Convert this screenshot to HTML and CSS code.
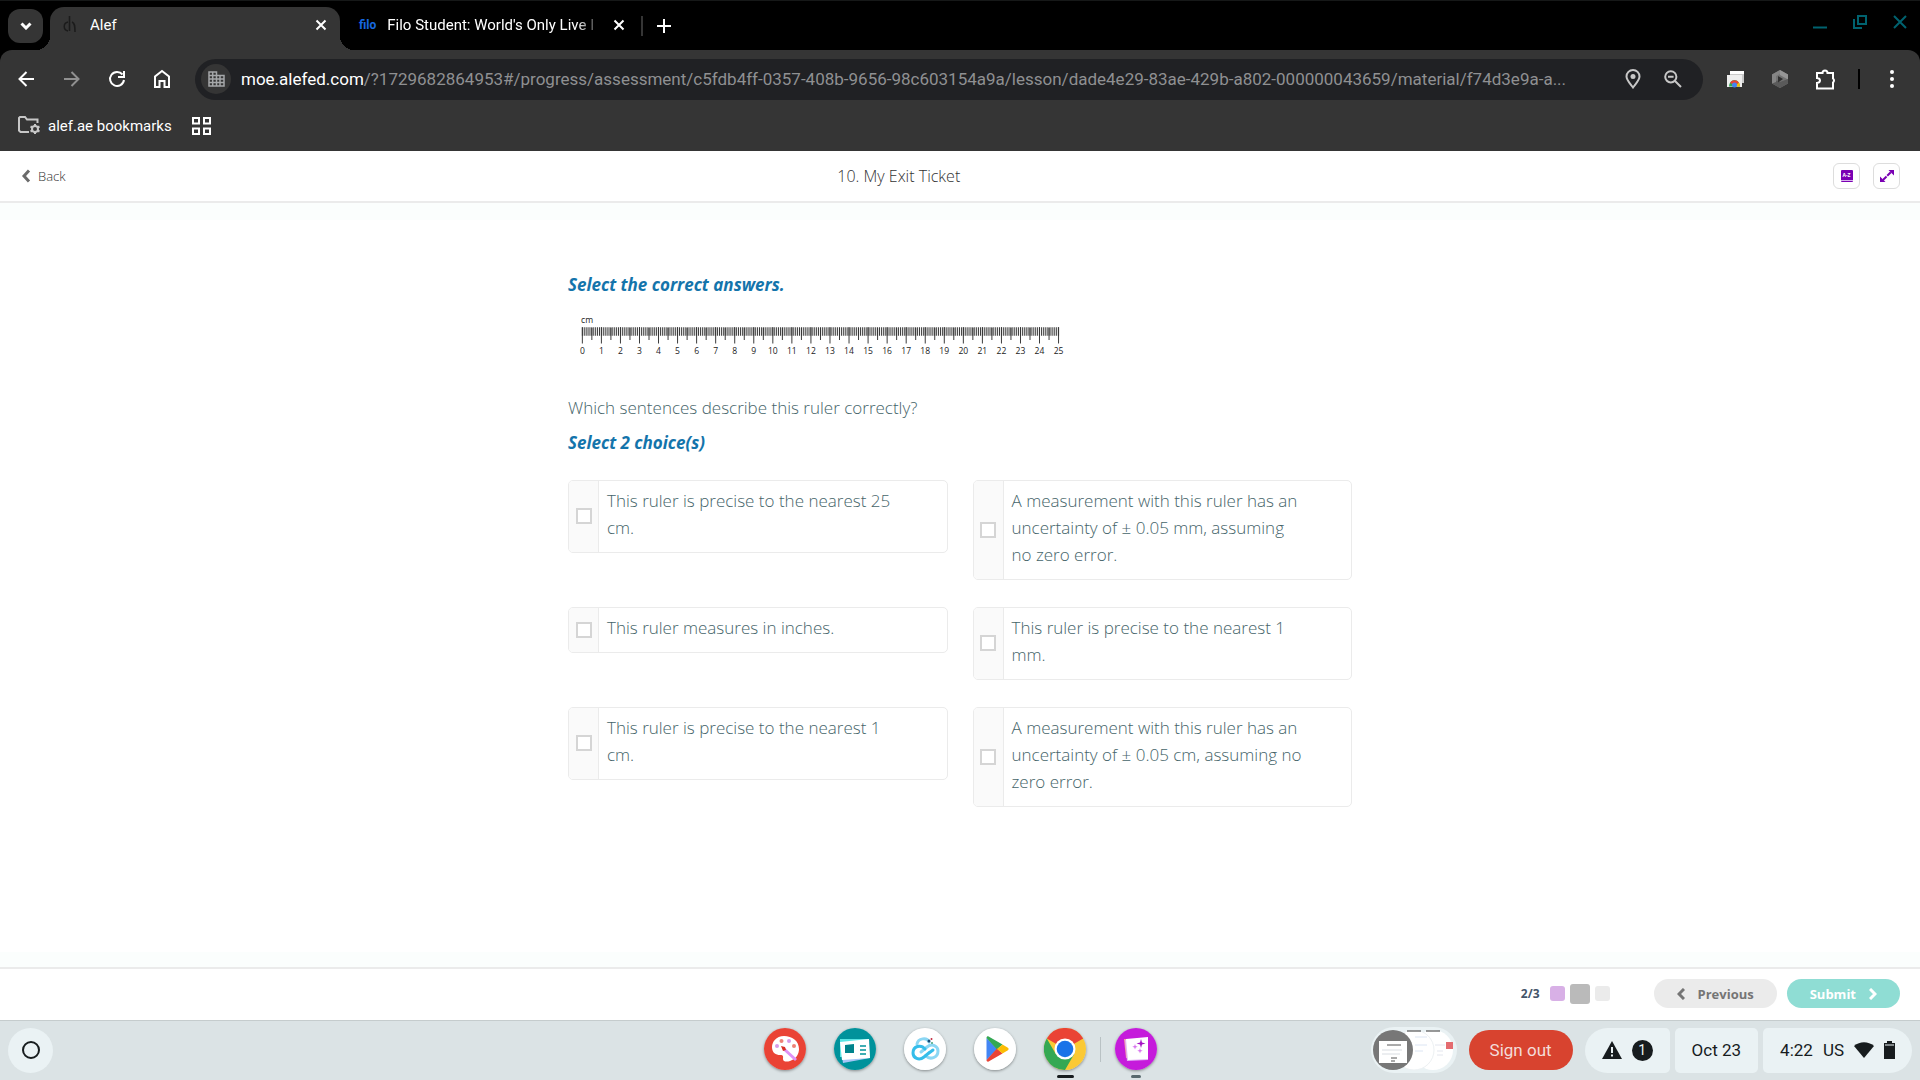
FILE: index.html
```html
<!doctype html>
<html lang="en">
  <head>
    <meta charset="UTF-8" />
    <meta name="viewport" content="width=device-width, initial-scale=1.0" />
    <title>Alef</title>
    <link rel="stylesheet" href="styles.css">
  </head>
  <body>
    <header class="browser">
      <div class="tabstrip">
        <button class="tab-search" aria-label="Search tabs">
          <svg width="12" height="8" viewBox="0 0 12 8"><path d="M1.500 1.500L6 6l4.500-4.500" class="line thick" /></svg>
        </button>
        <div class="tab active">
          <svg width="14" height="18" viewBox="0 0 14 18"><path d="M6.500 0v15M5 6C0 7 0 14 5 15M9 6c3 1 3 5 3 10" fill="none" stroke="#1b1b1b" stroke-width="1.500" /></svg>
          <span class="tab-title">Alef</span>
          <button class="close" aria-label="Close tab"><svg width="12" height="12" viewBox="0 0 12 12"><path d="M1.500 1.500l9 9M10.500 1.500l-9 9" class="line" /></svg></button>
        </div>
        <div class="tab">
          <span class="filo">f<i>i</i>lo</span>
          <span class="tab-title fade">Filo Student: World's Only Live I</span>
          <button class="close" aria-label="Close tab"><svg width="12" height="12" viewBox="0 0 12 12"><path d="M1.500 1.500l9 9M10.500 1.500l-9 9" class="line" /></svg></button>
        </div>
        <button class="new-tab" aria-label="New tab"><svg width="14" height="14" viewBox="0 0 14 14"><path d="M7 0v14M0 7h14" class="line" /></svg></button>
        <div class="window-controls">
          <button aria-label="Minimize"><svg width="16" height="16" viewBox="0 0 16 16"><path d="M1 13.500h14" /></svg></button>
          <button aria-label="Restore"><svg width="16" height="16" viewBox="0 0 16 16"><path d="M6 2h8v8H6zM2 5v9h8" /></svg></button>
          <button aria-label="Close"><svg width="16" height="16" viewBox="0 0 16 16"><path d="M2 2l12 12M14 2L2 14" /></svg></button>
        </div>
      </div>

      <div class="toolbar">
        <button class="nav" aria-label="Back"><svg width="17" height="16" viewBox="0 0 17 16"><path d="M16 8H2M8.500 1L1.500 8l7 7" class="line" /></svg></button>
        <button class="nav dim" aria-label="Forward"><svg width="17" height="16" viewBox="0 0 17 16"><path d="M1 8h14M8.500 1l7 7-7 7" class="line" /></svg></button>
        <button class="nav" aria-label="Reload"><svg width="18" height="18" viewBox="0 0 18 18"><path d="M14.500 4.500A7 7 0 1 0 16 10M16 1v6h-6" class="line" /></svg></button>
        <button class="nav" aria-label="Home"><svg width="18" height="20" viewBox="0 0 18 20"><path d="M2 18V7.500L9 2l7 5.500V18h-4.500v-6h-5v6z" class="line" /></svg></button>
        <div class="omnibox">
          <span class="site-chip">
            <svg width="17" height="16" viewBox="0 0 17 16"><path d="M1 1h7.500v14H1zM8.500 4.500H16V15H8.500M1 4.500h7.500M1 8h15M1 11.500h15M4.700 1v14M12 4.500V15" fill="none" stroke="#a5a7a9" stroke-width="1.500" /></svg>
          </span>
          <p class="url"><b>moe.alefed.com</b>/?1729682864953#/progress/assessment/c5fdb4ff-0357-408b-9656-98c603154a9a/lesson/dade4e29-83ae-429b-a802-000000043659/material/f74d3e9a-a...</p>
          <svg width="16" height="20" viewBox="0 0 16 20"><path d="M8 18.500C5 14.500 1.500 11 1.500 7.500a6.500 6.500 0 0 1 13 0C14.500 11 11 14.500 8 18.500z" class="line soft" /><circle cx="8" cy="7.500" r="2.500" fill="#c7c7c7" /></svg>
          <svg width="18" height="18" viewBox="0 0 18 18"><circle cx="6.800" cy="6.800" r="5.600" class="line soft" /><path d="M11 11l6 6M4 6.800h5.600" class="line soft" /></svg>
        </div>
        <div class="extensions">
          <svg width="19" height="18" viewBox="0 0 19 18">
            <path d="M4 1h14v12H4z" fill="#c9c9c9" /><path d="M4 1h14v3H4z" fill="#fff" /><path d="M1 5h15v12H1z" fill="#eee" />
            <path d="M3 16.500a5.500 6.500 0 0 1 11 0z" fill="#34a853" /><path d="M4 12.500a5.500 5 0 0 1 9 0L8.500 16z" fill="#ea4335" /><path d="M13 12.500a6 6 0 0 1 1 4H8.500z" fill="#fbbc04" /><circle cx="8.500" cy="15" r="2.500" fill="#4285f4" />
          </svg>
          <svg width="18" height="20" viewBox="0 0 18 20">
            <path d="M9 1l8 4.500v9L9 19l-8-4.500v-9z" fill="#737373" /><path d="M9 1l8 4.500v5L9 6z" fill="#969696" /><path d="M1 14.500l5-3L9 13l8-3v4.500L9 19z" fill="#5a5a5a" /><path d="M7 7l5 3-5 3.500z" fill="#303030" /><path d="M1 5.500L9 1v4L5 7v6l-4 1.500z" fill="#858585" />
          </svg>
          <svg width="22" height="21" viewBox="0 0 22 21"><path d="M2 4h5.500a2.500 2.500 0 0 1 5 0H18v5.500a2.500 2.500 0 0 1 0 4V19.500H2V14c4-.5 4-4.500 0-5z" class="line" /></svg>
          <span class="bar"></span>
          <svg width="6" height="20" viewBox="0 0 6 20" fill="#fff"><circle cx="3" cy="3" r="2" /><circle cx="3" cy="10" r="2" /><circle cx="3" cy="17" r="2" /></svg>
        </div>
      </div>

      <nav class="bookmarks">
        <a href="#">
          <svg width="22" height="19" viewBox="0 0 22 19"><path d="M11 16H2.500L1 14.500V2l1-1h5l2 2.500h10.500V7" class="line soft" /><circle cx="17" cy="13" r="3" class="line soft" /><path d="M17 8v2M17 16v2M12.500 10.500l2 1M19.500 14.500l2 1M12.500 15.500l2-1M19.500 11.500l2-1" class="line soft" /></svg>
          alef.ae bookmarks
        </a>
        <button class="nav" aria-label="Apps"><svg width="19" height="18" viewBox="0 0 19 18"><path d="M1 1h6v5.500H1zM12 1h6v5.500h-6zM1 11.500h6V17H1zM12 11.500h6V17h-6z" class="line" /></svg></button>
      </nav>
    </header>

    <div class="lesson-bar">
      <a class="back" href="#">
        <svg width="10" height="14" viewBox="0 0 10 14"><path d="M8 1.500L3 7l5 5.500" fill="none" stroke="#6b6b6b" stroke-width="3" /></svg>
        Back
      </a>
      <h1>10. My Exit Ticket</h1>
      <div class="lesson-tools">
        <button aria-label="Glossary"><span class="glossary">A-Z</span></button>
        <button aria-label="Full screen"><svg width="14" height="12" viewBox="0 0 14 12"><path d="M8.500 0H14v5.500zM0 6.500V12h5.500z" fill="#7a00b3" /><path d="M3 10l8-8" stroke="#7a00b3" stroke-width="2" stroke-dasharray="5 1" /></svg></button>
      </div>
    </div>

    <main>
      <form class="question" id="question">
        <p class="instruction">Select the correct answers.</p>
        <svg class="ruler" viewBox="-15 0 528 48" role="img" aria-label="Ruler from 0 to 25 cm">
          <text x="5" y="12">cm</text>
          <!-- mm, half cm and cm marks -->
          <path d="M-.5 20.500h501" stroke-width="9" stroke-dasharray="1 1" />
          <path d="M9.500 23h490" stroke-width="13" stroke-dasharray="1 19" />
          <path d="M-.5 24.500h501" stroke-width="17" stroke-dasharray="1 19" />
          <text x="0" y="44">0</text>
          <text x="20" y="44">1</text>
          <text x="40" y="44">2</text>
          <text x="60" y="44">3</text>
          <text x="80" y="44">4</text>
          <text x="100" y="44">5</text>
          <text x="120" y="44">6</text>
          <text x="140" y="44">7</text>
          <text x="160" y="44">8</text>
          <text x="180" y="44">9</text>
          <text x="200" y="44">10</text>
          <text x="220" y="44">11</text>
          <text x="240" y="44">12</text>
          <text x="260" y="44">13</text>
          <text x="280" y="44">14</text>
          <text x="300" y="44">15</text>
          <text x="320" y="44">16</text>
          <text x="340" y="44">17</text>
          <text x="360" y="44">18</text>
          <text x="380" y="44">19</text>
          <text x="400" y="44">20</text>
          <text x="420" y="44">21</text>
          <text x="440" y="44">22</text>
          <text x="460" y="44">23</text>
          <text x="480" y="44">24</text>
          <text x="500" y="44">25</text>
        </svg>
        <p class="prompt">Which sentences describe this ruler correctly?</p>
        <p class="instruction">Select 2 choice(s)</p>
        <div class="choices">
          <label class="choice"><span class="tick"><input type="checkbox"></span><span class="answer">This ruler is precise to the nearest 25 cm.</span></label>
          <label class="choice"><span class="tick"><input type="checkbox"></span><span class="answer">A measurement with this ruler has an uncertainty of ± 0.05 mm, assuming no zero error.</span></label>
          <label class="choice"><span class="tick"><input type="checkbox"></span><span class="answer">This ruler measures in inches.</span></label>
          <label class="choice"><span class="tick"><input type="checkbox"></span><span class="answer">This ruler is precise to the nearest 1 mm.</span></label>
          <label class="choice"><span class="tick"><input type="checkbox"></span><span class="answer">This ruler is precise to the nearest 1 cm.</span></label>
          <label class="choice"><span class="tick"><input type="checkbox"></span><span class="answer">A measurement with this ruler has an uncertainty of ± 0.05 cm, assuming no zero error.</span></label>
        </div>
      </form>
    </main>

    <footer class="pager">
      <span class="count">2/3</span>
      <div class="steps"><i class="done"></i><i class="current"></i><i></i></div>
      <button class="pill previous"><svg width="8" height="12" viewBox="0 0 8 12"><path d="M7 1L2 6l5 5" /></svg>Previous</button>
      <button class="pill submit" form="question">Submit<svg width="8" height="12" viewBox="0 0 8 12"><path d="M1 1l5 5-5 5" /></svg></button>
    </footer>

    <div class="shelf">
      <button class="launcher" aria-label="Launcher"><svg width="20" height="20" viewBox="0 0 20 20"><circle cx="10" cy="10" r="8" fill="none" stroke="#171c1e" stroke-width="2" /></svg></button>
      <div class="apps">
        <button class="app" aria-label="Canvas">
          <svg width="42" height="42" viewBox="0 0 42 42"><circle cx="21" cy="21" r="21" fill="#ea4335" /><path d="M20 8C12 8 8 14 8 19c0 6 4 8 8 8 4 0 3 2 3 4 0 3 4 3 7 2 6-2 9-7 9-12C35 13 28 8 20 8z" fill="#fff" /><circle cx="13" cy="18" r="2" fill="#d79ae8" /><circle cx="17.500" cy="13" r="2" fill="#ee8277" /><circle cx="25" cy="13" r="2" fill="#d79ae8" /><circle cx="30" cy="18" r="2" fill="#ee8277" /><path d="M20 21l12 11" stroke="#df91f5" stroke-width="3" /><path d="M17 18l4 1 1 3-3 1z" fill="#d93025" /></svg>
        </button>
        <button class="app" aria-label="Screencast">
          <svg width="42" height="42" viewBox="0 0 42 42"><circle cx="21" cy="21" r="21" fill="#00929b" /><path d="M6 14l28-3 2 19-27 5z" fill="#a6c5f6" /><path d="M6 11h29v18H6z" fill="#5ae5e4" /><path d="M6 14l29-3 1 19-28 2z" fill="#fff" /><path d="M11 17l9-1v9h-9z" fill="#00838c" /><path d="M26 18h6M26 22h6M26 26h6" stroke="#00929b" stroke-width="1.500" /></svg>
        </button>
        <button class="app" aria-label="Cloud">
          <svg width="42" height="42" viewBox="0 0 42 42"><circle cx="21" cy="21" r="21" fill="#fff" /><g fill="none" stroke-width="3" stroke-linecap="round"><path d="M13 16c1-6 10-7 12-2M17 24l6-5c5-4 11-1 11 4 0 7-8 9-12 5" stroke="#8bd7f4" /><path d="M26 24l-6 5c-5 4-11 1-11-4 0-7 8-9 12-4M21 28l8-6" stroke="#35bdea" /></g><circle cx="25" cy="13" r="1.500" fill="#174a75" /><circle cx="27.500" cy="11" r="1" fill="#c2273d" /><circle cx="28" cy="15" r="1" fill="#44a27b" /></svg>
        </button>
        <button class="app" aria-label="Play Store">
          <svg width="42" height="42" viewBox="0 0 42 42"><circle cx="21" cy="21" r="21" fill="#fff" /><path d="M12.500 10v22l11-11z" fill="#4285f4" /><path d="M12.500 10c0-2 2-2 3-1l13 7.500-5.500 5z" fill="#34a853" /><path d="M12.500 32c0 2 2 2 3 1l13-7.500-5.500-5z" fill="#ea4335" /><path d="M23 21l5.500-4.500 5 3c1.500 1 1.500 2 0 3l-5 3z" fill="#fbbc04" /></svg>
        </button>
        <button class="app running" aria-label="Chrome">
          <svg width="42" height="42" viewBox="0 0 42 42"><circle cx="21" cy="21" r="21" fill="#fbc934" /><path d="M21 21L2.800 10.500A21 21 0 0 1 39.200 10.500z" fill="#ea4335" /><path d="M2.800 10.500A21 21 0 0 0 21 42l9.100-15.700L21 21l-9.100 5.300z" fill="#34a853" /><circle cx="21" cy="21" r="10.500" fill="#fff" /><circle cx="21" cy="21" r="8.300" fill="#1a73e8" /></svg>
        </button>
        <span class="divider"></span>
        <button class="app running idle" aria-label="Explore">
          <svg width="42" height="42" viewBox="0 0 42 42"><circle cx="21" cy="21" r="21" fill="#c51bdb" /><path d="M9 11h23v19H11z" fill="#f3a4a0" /><path d="M10 12l2 21 21-1V13z" fill="#e3b3f6" /><path d="M11 11l22-2v22l-20 1z" fill="#fff" /><path d="M26 11l1 3.500 3.500 1-3.500 1-1 3.500-1-3.500-3.500-1 3.500-1z" fill="#a414c4" /><path d="M20 16l.7 2 2 .7-2 .7-.7 2-.7-2-2-.7 2-.7zM25 20l.7 2 2 .7-2 .7-.7 2-.7-2-2-.7 2-.7z" fill="#d773ed" /></svg>
        </button>
      </div>
      <div class="status">
        <button class="recents" aria-label="Recent screen captures">
          <svg width="86" height="46" viewBox="0 0 86 46"><rect width="86" height="46" rx="23" fill="#eaf2f4" /><circle cx="62" cy="23" r="20" fill="#fff" /><path d="M55 4h14" stroke="#333" /><rect x="75" y="15" width="7" height="7" fill="#e46c70" /><path d="M66 24h6M66 28h6M64 18h10" stroke="#e3e6ee" /><circle cx="43" cy="23" r="20" fill="#fff" stroke="#edf1f3" /><path d="M36 4h14" stroke="#333" /><path d="M44 10h12M44 18h12M44 24h8" stroke="#dce5f3" /><circle cx="22" cy="23" r="20" fill="#777" /><path d="M8 14h28v22H8z" fill="#fff" /><path d="M16 18h14M20 31h6M20 34h4" stroke="#555" /><path d="M11 23h20M11 27h18" stroke="#d9dde2" /></svg>
        </button>
        <button class="sign-out">Sign out</button>
        <div class="tray">
          <button class="tray-item first" aria-label="Notifications">
            <svg width="20" height="18" viewBox="0 0 20 18"><path d="M10 0l10 18H0z" fill="#171c1e" /><path d="M10 6v6M10 13.500v2" stroke="#eaf2f4" stroke-width="2" /></svg>
            <span class="badge">1</span>
          </button>
          <button class="tray-item date">Oct 23</button>
          <button class="tray-item last">
            <span>4:22</span><span>US</span>
            <svg width="20" height="16" viewBox="0 0 20 16"><path d="M0 4C6-1 14-1 20 4L10 16z" fill="#171c1e" /></svg>
            <svg width="11" height="18" viewBox="0 0 11 18"><path d="M3 0h5v2h3v16H0V2h3z" fill="#171c1e" /><path d="M1 4h9" stroke="#eaf2f4" /></svg>
          </button>
        </div>
      </div>
    </div>
  </body>
</html>
```

FILE: styles.css
```css
* {
  box-sizing: border-box;
}
body {
  margin: 0;
  min-height: 100vh;
  display: flex;
  flex-direction: column;
  background: #ffffff;
  font-family: "Open Sans", sans-serif;
}
button {
  border: 0;
  padding: 0;
  background: none;
  font: inherit;
  color: inherit;
}
a {
  color: inherit;
  text-decoration: none;
}
p,
h1 {
  margin: 0;
}
svg {
  display: block;
  flex: none;
}

/* Browser */
.browser {
  background: #000000;
  color: #ffffff;
  font-family: Roboto, sans-serif;
  font-size: 15px;
}
.line {
  fill: none;
  stroke: #ffffff;
  stroke-width: 2;
}
.line.thick {
  stroke-width: 3;
}
.line.soft {
  stroke: #c7c7c7;
}
.tabstrip {
  height: 50px;
  padding: 0 12px 0 8px;
  display: flex;
  align-items: center;
  border-top: 1px solid #161818;
}
.tab-search {
  width: 35px;
  height: 34px;
  border-radius: 12px;
  background: #353535;
  display: grid;
  place-items: center;
}
.tab {
  width: 290px;
  height: 43px;
  padding: 0 13px 8px;
  display: flex;
  align-items: center;
  gap: 13px;
}
.tab.active {
  margin: 6px 0 0 7px;
  position: relative;
  border-radius: 14px 14px 0 0;
  background: #353535;
}
/* curved feet of the selected tab */
.tab.active::before,
.tab.active::after {
  content: "";
  position: absolute;
  bottom: 0;
  left: -14px;
  width: 14px;
  height: 14px;
  background: radial-gradient(circle at 0 0, transparent 14px, #353535 14px);
}
.tab.active::after {
  left: 100%;
  background: radial-gradient(circle at 100% 0, transparent 14px, #353535 14px);
}
.tab:not(.active) {
  margin-top: 6px;
  padding-left: 19px;
  padding-right: 5px;
  gap: 11px;
}
.tab-title {
  flex: 1;
  overflow: hidden;
  white-space: nowrap;
}
.fade {
  mask-image: linear-gradient(to right, #000000 88%, transparent);
}
.filo {
  color: #1769e0;
  font-size: 12px;
  font-weight: 700;
}
.filo i {
  font-style: normal;
  color: #d4802c;
}
.new-tab {
  height: 20px;
  margin-left: 11px;
  padding-left: 14px;
  border-left: 2px solid #353535;
}
.window-controls {
  margin-left: auto;
  display: flex;
  gap: 24px;
  padding-bottom: 8px;
}
.window-controls path {
  fill: none;
  stroke: #00626f;
  stroke-width: 2;
}
.toolbar {
  height: 58px;
  padding: 0 25px 0 18px;
  display: flex;
  align-items: center;
  background: #353535;
  border-radius: 12px 12px 0 0;
}
.nav {
  width: 18px;
  margin-right: 27px;
}
.dim {
  opacity: 0.45;
}
.omnibox {
  flex: 1;
  min-width: 0;
  height: 41px;
  margin: 0 23px 0 -3px;
  padding: 0 21px 0 6px;
  display: flex;
  align-items: center;
  gap: 23px;
  border-radius: 21px;
  background: #202124;
}
.site-chip {
  width: 30px;
  height: 30px;
  margin-right: -13px;
  border-radius: 50%;
  background: #353535;
  display: grid;
  place-items: center;
}
.url {
  flex: 1;
  overflow: hidden;
  white-space: nowrap;
  font-size: 17px;
  color: #8f9092;
}
.url b {
  font-weight: 400;
  color: #ffffff;
}
.extensions {
  display: flex;
  align-items: center;
  gap: 26px;
}
.bar {
  width: 2px;
  height: 20px;
  margin: 0 3px 0 -5px;
  background: #000000;
}
.bookmarks {
  height: 43px;
  padding: 0 18px 8px;
  display: flex;
  align-items: center;
  gap: 20px;
  background: #353535;
}
.bookmarks a {
  display: flex;
  align-items: center;
  gap: 8px;
}

/* Lesson header */
.lesson-bar {
  height: 52px;
  padding: 0 20px 0 21px;
  display: flex;
  align-items: center;
  border-bottom: 2px solid #ebebeb;
  color: #333333;
}
.back {
  display: flex;
  align-items: center;
  gap: 7px;
  font-size: 13px;
  font-weight: 300;
}
h1 {
  flex: 1;
  text-align: center;
  font-size: 16px;
  font-weight: 300;
}
.lesson-tools {
  width: 168px;
  display: flex;
  justify-content: flex-end;
  gap: 13px;
}
.lesson-tools button {
  width: 27px;
  height: 26px;
  border: 1px solid #dddddd;
  border-radius: 6px;
  display: grid;
  place-items: center;
}
.glossary {
  width: 12px;
  height: 12px;
  border-radius: 1px;
  background: linear-gradient(#7a00b3 10px, #d9b3ec 10px, #d9b3ec 11px, #7a00b3 11px);
  color: #ffffff;
  font-size: 5px;
  font-weight: 700;
  line-height: 10px;
  text-align: center;
}

/* Question */
main {
  flex: 1;
  padding: 51px 20px 40px;
  border-top: 17px solid #fbfefd;
  border-bottom: 15px solid #fbfefd;
}
.question {
  max-width: 784px;
  margin: 0 auto;
  font-size: 17px;
  font-weight: 300;
  line-height: 27px;
  color: #456469;
}
.instruction {
  font-weight: 700;
  font-style: italic;
  color: #1474ab;
}
.ruler {
  width: 503px;
  margin: 14px 0 36px;
}
.ruler path {
  fill: none;
  stroke: #333333;
}
.ruler text {
  font-size: 9px;
  font-weight: 400;
  text-anchor: middle;
  fill: #222222;
}
.prompt {
  margin-bottom: 8px;
}
.choices {
  margin-top: 24px;
  display: grid;
  grid-template-columns: 1fr 1fr;
  align-items: start;
  gap: 27px 25px;
}
.choice {
  display: flex;
  border: 1px solid #ebebeb;
  border-radius: 5px;
  background: #ffffff;
  overflow: hidden;
}
.tick {
  width: 30px;
  flex: none;
  display: grid;
  place-items: center;
  background: #fafafa;
  border-right: 1px solid #ebebeb;
}
.tick input {
  appearance: none;
  width: 16px;
  height: 16px;
  margin: 0;
  border: 2px solid #d5d5d5;
  background: #ffffff;
}
.answer {
  padding: 6px 46px 11px 8px;
}

/* Pager */
.pager {
  height: 53px;
  padding: 0 20px 2px;
  display: flex;
  align-items: center;
  justify-content: flex-end;
  gap: 10px;
  border-top: 2px solid #ebebeb;
  font-weight: 700;
}
.count {
  font-size: 12px;
  color: #44546a;
}
.steps {
  display: flex;
  align-items: center;
  gap: 5px;
  margin-right: 34px;
}
.steps i {
  width: 15px;
  height: 15px;
  border-radius: 3px;
  background: #ebebeb;
}
.steps .done {
  background: #d8b0e6;
}
.steps .current {
  width: 20px;
  height: 20px;
  background: #bababa;
}
.pill {
  height: 29px;
  padding: 0 23px;
  display: flex;
  align-items: center;
  gap: 13px;
  border-radius: 15px;
  font-size: 13px;
}
.pill path {
  fill: none;
  stroke: currentColor;
  stroke-width: 3;
}
.previous {
  background: #ebebeb;
  color: #757575;
}
.submit {
  background: #8fddd4;
  color: #ffffff;
}

/* Shelf */
.shelf {
  height: 60px;
  padding: 0 8px 1px;
  display: grid;
  grid-template-columns: 1fr auto 1fr;
  align-items: center;
  border-top: 1px solid #c5cccd;
  background: #dbe3e5;
  color: #171c1e;
  font-family: Roboto, sans-serif;
  font-size: 17px;
}
.launcher {
  width: 45px;
  height: 45px;
  border-radius: 50%;
  background: #eaf2f4;
  display: grid;
  place-items: center;
}
.apps {
  display: flex;
  align-items: center;
  gap: 28px;
  padding-bottom: 2px;
}
.app {
  position: relative;
  width: 42px;
  height: 42px;
  border-radius: 50%;
  box-shadow: 0 1px 3px #00000066;
}
.apps .divider {
  width: 1px;
  height: 25px;
  margin: 0 -14px;
  background: #b9c2c4;
}
.running::after {
  content: "";
  position: absolute;
  left: 13px;
  top: 47px;
  width: 17px;
  height: 3px;
  border-radius: 2px;
  background: #171c1e;
}
.running.idle::after {
  left: 16px;
  width: 10px;
  background: #58696e;
}
.status {
  display: flex;
  align-items: center;
  justify-content: flex-end;
  gap: 12px;
}
.sign-out {
  height: 40px;
  padding: 0 21px;
  border-radius: 20px;
  background: #d8432f;
  color: #f3dcd9;
}
.tray {
  display: flex;
  gap: 5px;
}
.tray-item {
  height: 45px;
  padding: 0 17px;
  display: flex;
  align-items: center;
  gap: 10px;
  border-radius: 5px;
  background: #eaf2f4;
}
.tray-item.first {
  border-radius: 23px 5px 5px 23px;
}
.tray-item.last {
  border-radius: 5px 23px 23px 5px;
}
.badge {
  width: 21px;
  height: 21px;
  border-radius: 50%;
  background: #171c1e;
  color: #eaf2f4;
  font-size: 14px;
  line-height: 21px;
}
```
